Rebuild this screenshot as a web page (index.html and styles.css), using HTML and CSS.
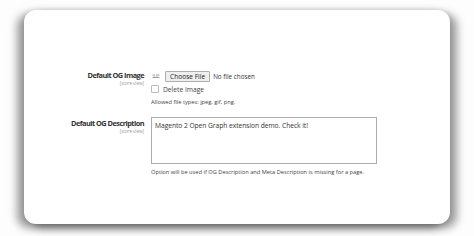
FILE: index.html
```html
<!DOCTYPE html>
<html lang="en">
  <head>
    <meta charset="UTF-8" />
    <title>Open Graph settings</title>
    <link rel="stylesheet" href="styles.css">
  </head>
  <body>
    <div class="card">
      <div class="row">
        <div class="label">
          <span class="title">Default OG Image</span>
          <span class="scope">[store view]</span>
        </div>
        <div class="control">
          <div class="file-line">
            <svg class="thumb" width="8" height="5" viewBox="0 0 8 5">
              <path d="M0.5 1 H3 M4 1 H7.5 M0.5 3.5 H7.5" fill="none" stroke="#888" stroke-width="0.8" />
              <path d="M1 2.3 H6.5" fill="none" stroke="#bbb" stroke-width="0.6" />
            </svg>
            <span class="file-btn">Choose File</span>
            <span class="file-name">No file chosen</span>
          </div>
          <label class="check">
            <span class="box"></span>
            Delete Image
          </label>
          <p class="note">Allowed file types: jpeg, gif, png.</p>
        </div>
      </div>

      <div class="row">
        <div class="label">
          <span class="title">Default OG Description</span>
          <span class="scope">[store view]</span>
        </div>
        <div class="control">
          <div class="textarea">Magento 2 Open Graph extension demo. Check it!</div>
          <p class="note">Option will be used if OG Description and Meta Description is missing for a page.</p>
        </div>
      </div>
    </div>
  </body>
</html>
```

FILE: styles.css
```css
* {
  margin: 0;
  padding: 0;
  box-sizing: border-box;
  font-family: "Open Sans", Arial, sans-serif;
}

body {
  background-color: #fdfdfd;
  padding: 10px 24px 12px 24px;
}

.card {
  width: 426px;
  height: 214px;
  background: white;
  border-radius: 12px;
  box-shadow: -7px 4px 8px rgba(0, 0, 0, 0.38), 7px 4px 8px rgba(0, 0, 0, 0.38), 0 0 6px rgba(0, 0, 0, 0.1);
  padding-top: 59px;
}

.row {
  display: grid;
  grid-template-columns: 120px 1fr;
  column-gap: 7px;
  margin-bottom: 11px;
}

.label {
  display: flex;
  flex-direction: column;
  align-items: flex-end;
  color: #333;
  padding-top: 1px;
}

.title {
  font-size: 7.4px;
  font-weight: bold;
  letter-spacing: -0.55px;
  line-height: 10px;
}

.scope {
  font-size: 4.5px;
  color: #999;
  line-height: 6px;
}

.control {
  color: #303030;
}

.file-line {
  display: flex;
  align-items: center;
  height: 12px;
  margin-top: 1px;
}

.thumb {
  margin-left: 1px;
  margin-right: 5px;
}

.file-btn {
  font-size: 6.6px;
  line-height: 9px;
  padding: 0 4px;
  border: 1px solid #adadad;
  background: #efefef;
  border-radius: 1px;
  color: #222;
}

.file-name {
  font-size: 6.3px;
  margin-left: 3px;
  color: #333;
}

.check {
  display: flex;
  align-items: center;
  font-size: 6.7px;
  color: #444;
  margin-top: 2px;
  height: 10px;
}

.box {
  width: 8px;
  height: 8px;
  border: 1px solid #bbb;
  border-radius: 1px;
  margin-right: 4px;
}

.note {
  font-size: 5.7px;
  color: #444;
  margin-top: 4px;
}

.textarea {
  width: 226px;
  height: 47px;
  border: 1px solid #adadad;
  font-size: 6.7px;
  letter-spacing: -0.05px;
  padding: 3px 3px;
  color: #333;
  line-height: 10px;
}
```
